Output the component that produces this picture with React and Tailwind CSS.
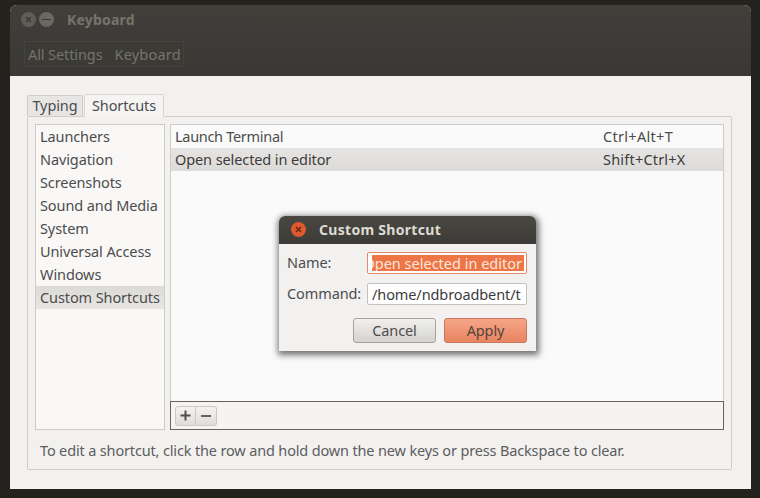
import React from "react";

const Row = ({ children, active }) => (
  <div className={"h-[23px] pl-[4px] flex items-center text-[14.5px] text-[#4c4c4c] " + (active ? "bg-gradient-to-b from-[#dcdad7] to-[#e8e6e4]" : "")}>
    {children}
  </div>
);

export default function App() {
  const items = ["Launchers", "Navigation", "Screenshots", "Sound and Media", "System", "Universal Access", "Windows"];
  return (
    <div className="relative w-[760px] h-[498px] overflow-hidden bg-[#23221d] pt-[5px] pl-[10px] font-['Noto_Sans',sans-serif] tracking-[-0.1px]">
      <div className="w-[741px] h-[484px] flex flex-col rounded-t-[7px] overflow-hidden bg-[#f2f1f0]">
        {/* title bar */}
        <div className="h-[71px] shrink-0 bg-gradient-to-b from-[#423f3b] to-[#393834] flex flex-col">
          <div className="h-[28px] flex items-center pl-[11px]">
            <div className="w-[15px] h-[15px] rounded-full bg-[#5f5d58] flex items-center justify-center">
              <svg width="7" height="7" viewBox="0 0 7 7"><path d="M1 1L6 6M6 1L1 6" stroke="#35342f" strokeWidth="1.3" /></svg>
            </div>
            <div className="w-[15px] h-[15px] rounded-full bg-[#6a6863] ml-[3px] flex items-center justify-center">
              <div className="w-[9px] h-[1px] bg-[#3a3934]" />
            </div>
            <span className="ml-[13px] text-[14px] font-bold text-[#76736c] tracking-[0.2px]">Keyboard</span>
          </div>
          <div className="ml-[14px] mt-[8px] w-[160px] h-[26px] border border-[#45433e] bg-[#3b3a35] flex items-center pl-[3px] pt-[2px] text-[14.5px] text-[#75736c]">
            <span>All Settings</span>
            <span className="ml-[12px] tracking-[0.2px]">Keyboard</span>
          </div>
        </div>
        {/* content */}
        <div className="flex-1 pl-[17px] pr-[18px] pt-[17px] flex flex-col">
          <div className="flex items-end h-[23px] relative z-10">
            <div className="w-[56px] h-[21px] bg-[#e8e6e4] border border-b-0 border-[#cfcdca] rounded-t-[2px] flex items-center justify-center text-[14.5px] text-[#4c4c4c]">Typing</div>
            <div className="ml-[1px] w-[80px] h-[23px] bg-[#f5f4f3] border border-b-0 border-[#d8d6d3] rounded-t-[2px] flex items-center justify-center text-[14.5px] text-[#4c4c4c] -mb-[1px]">Shortcuts</div>
          </div>
          <div className="w-[705px] h-[354px] border border-[#d0cecb] rounded-[2px] pl-[7px] pt-[7px] flex flex-col">
            <div className="flex h-[306px]">
              <div className="w-[130px] h-[306px] border border-[#cdcbc8] bg-[#f9f8f7]">
                {items.map((t) => <Row key={t}>{t}</Row>)}
                <Row active>Custom Shortcuts</Row>
              </div>
              <div className="ml-[5px] w-[554px] flex flex-col">
                <div className="h-[277px] border border-[#cdcbc8] border-b-0 bg-[#fafafa]">
                  <div className="h-[23px] pl-[4px] pr-[24px] flex items-center justify-between text-[14.5px] text-[#4c4c4c]">
                    <span className="tracking-[-0.3px]">Launch Terminal</span>
                    <span className="w-[96px] tracking-[0.3px]">Ctrl+Alt+T</span>
                  </div>
                  <div className="h-[23px] pl-[4px] pr-[24px] flex items-center justify-between text-[14.5px] text-[#3c3c3c] bg-gradient-to-b from-[#e6e4e2] to-[#dddbd8]">
                    <span>Open selected in editor</span>
                    <span className="w-[96px] tracking-[0.2px]">Shift+Ctrl+X</span>
                  </div>
                </div>
                <div className="h-[29px] border border-[#66645f] bg-[#f5f4f3] pl-[4px] flex items-center">
                  <div className="w-[21px] h-[20px] border border-[#cbc9c6] rounded-l-[3px] bg-gradient-to-b from-[#f4f3f2] to-[#dfdddb] flex items-center justify-center">
                    <svg width="11" height="11" viewBox="0 0 11 11"><path d="M5.5 0.5V10.5M0.5 5.5H10.5" stroke="#4f4e4a" strokeWidth="2" /></svg>
                  </div>
                  <div className="w-[21px] h-[20px] border border-l-0 border-[#cbc9c6] rounded-r-[3px] bg-gradient-to-b from-[#f4f3f2] to-[#dfdddb] flex items-center justify-center">
                    <div className="w-[10px] h-[2px] bg-[#64635e]" />
                  </div>
                </div>
              </div>
            </div>
            <div className="mt-[10px] pl-[5px] text-[14.5px] text-[#5d5d5d] leading-[20px] tracking-[-0.155px]">
              To edit a shortcut, click the row and hold down the new keys or press Backspace to clear.
            </div>
          </div>
        </div>
      </div>

      {/* dialog */}
      <div className="absolute left-[279px] top-[216px] w-[257px] h-[135px] rounded-t-[6px] bg-[#f2f1f0] shadow-[1px_2px_6px_2px_rgba(0,0,0,0.55)] flex flex-col overflow-hidden">
        <div className="h-[28px] shrink-0 pb-[2px] bg-gradient-to-b from-[#4a4843] to-[#3c3b37] flex items-center pl-[12px]">
          <div className="w-[15px] h-[15px] rounded-full bg-[#dd5a2f] flex items-center justify-center">
            <svg width="7" height="7" viewBox="0 0 7 7"><path d="M1 1L6 6M6 1L1 6" stroke="#5c2410" strokeWidth="1.4" /></svg>
          </div>
          <span className="ml-[13px] text-[14px] font-bold text-[#dfdbd2] tracking-[0.3px]">Custom Shortcut</span>
        </div>
        <div className="pl-[8px] pr-[9px] pt-[8px]">
          <div className="flex items-center h-[22px]">
            <span className="w-[80px] text-[14.5px] text-[#4c4c4c]">Name:</span>
            <div className="w-[160px] h-[22px] border border-[#e58a68] rounded-[2px] bg-white px-[2px] py-[2px] overflow-hidden">
              <div className="h-[16px] bg-[#ee7545] border-l-2 border-white text-[#fbe7dd] text-[14.5px] leading-[16px] whitespace-nowrap flex justify-end pr-[2px] overflow-hidden tracking-[0px]">
                <span className="shrink-0">Open selected in editor</span>
              </div>
            </div>
          </div>
          <div className="flex items-center h-[22px] mt-[9px]">
            <span className="w-[80px] text-[14.5px] text-[#4c4c4c]">Command:</span>
            <div className="w-[160px] h-[22px] border border-[#c4c2bf] rounded-[2px] bg-white pl-[4px] overflow-hidden text-[14.5px] text-[#3c3c3c] leading-[20px] whitespace-nowrap">/home/ndbroadbent/t</div>
          </div>
          <div className="flex justify-end gap-[8px] mt-[13px]">
            <div className="w-[83px] h-[25px] border border-[#a5a39f] rounded-[3px] bg-gradient-to-b from-[#f1f0ef] to-[#d5d3d0] flex items-center justify-center text-[14.5px] text-[#4c4c4c]">Cancel</div>
            <div className="w-[83px] h-[25px] border border-[#c9785b] rounded-[3px] bg-gradient-to-b from-[#f4a588] to-[#e98460] flex items-center justify-center text-[14.5px] text-[#55443c]">Apply</div>
          </div>
        </div>
      </div>
    </div>
  );
}
